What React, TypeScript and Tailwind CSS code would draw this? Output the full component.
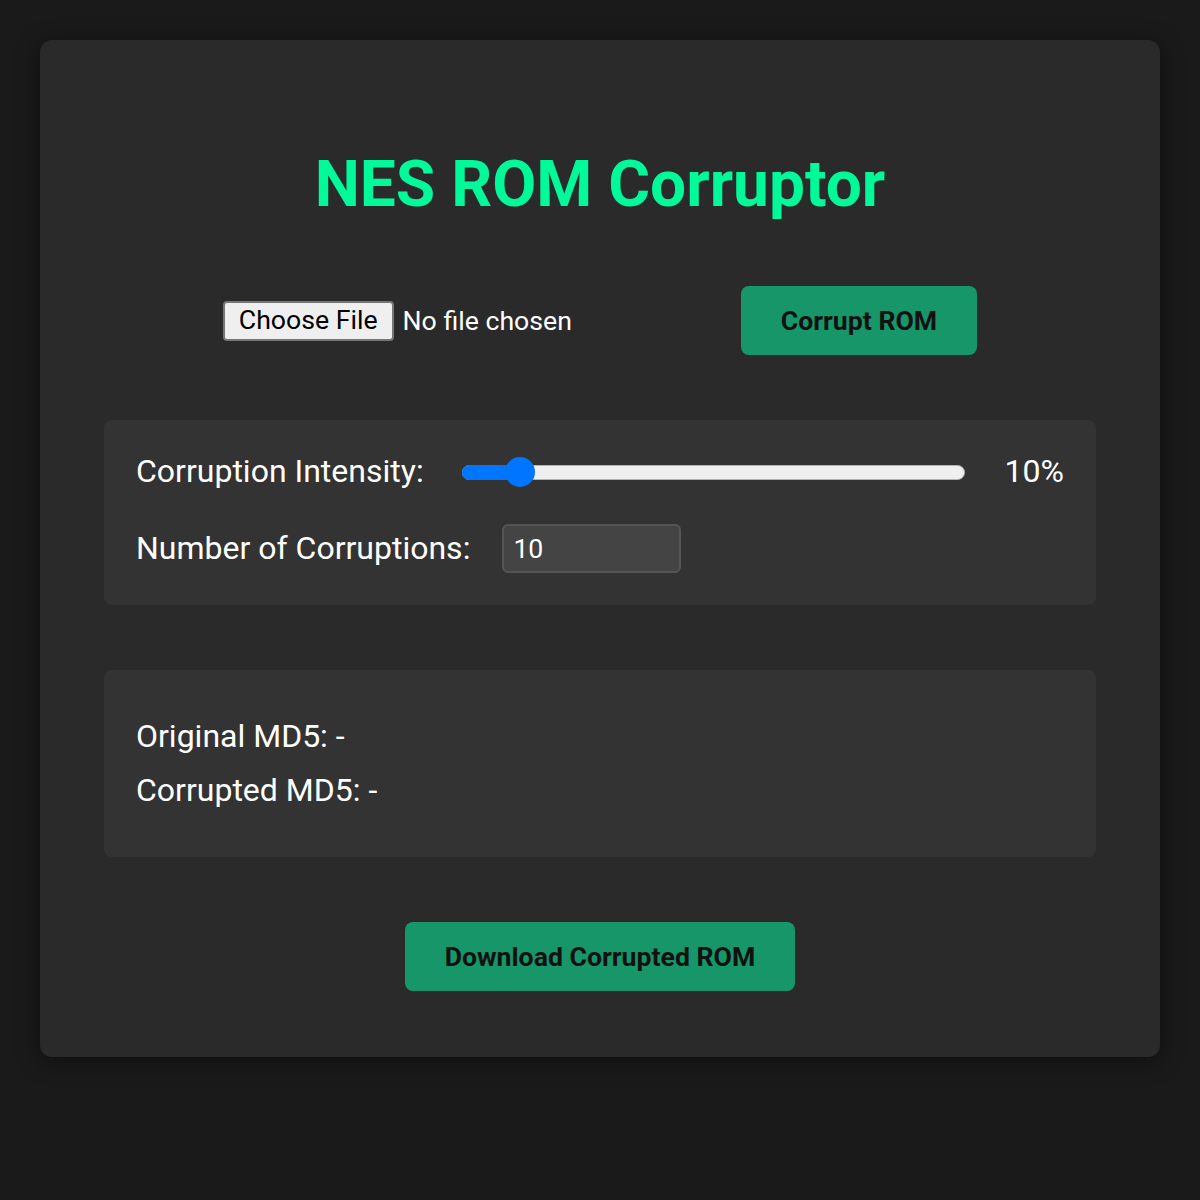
import { useState } from "react";

const green = "bg-[#169669] hover:bg-[#18a373]";

// range input look-alike, value 1..100
function IntensitySlider({ value }: { value: number }) {
  const pct = (value - 1) / 99;
  return (
    <div className="relative h-[30px] flex-1 flex items-center">
      <div className="h-[15px] w-full rounded-full bg-[#efefef] border border-[#b3b3b3]" />
      <div
        className="absolute left-0 h-[15px] rounded-l-full bg-[#0075ff]"
        style={{ width: `calc((100% - 30px) * ${pct} + 15px)` }}
      />
      <div
        className="absolute top-0 h-[30px] w-[30px] rounded-full bg-[#0075ff]"
        style={{ left: `calc((100% - 30px) * ${pct})` }}
      />
    </div>
  );
}

export default function App() {
  const [intensity] = useState(10);
  const [count, setCount] = useState("10");

  return (
    <div className="min-h-screen bg-[#1a1a1a] p-10 font-['Roboto',sans-serif] text-[32px] text-white">
      <div className="rounded-xl bg-[#2a2a2a] px-16 pt-16 pb-[66px] shadow-[0_4px_24px_rgba(0,0,0,0.45)]">
        <h1 className="mt-[43px] text-center text-[64px] font-bold leading-[75px] text-[#00fa9a]">
          NES ROM Corruptor
        </h1>

        <div className="mt-16 flex items-center justify-center gap-10">
          <input
            type="file"
            className="w-[478px] text-[26.67px] leading-[31px] text-white file:mr-[9px] file:h-10 file:rounded-[4px] file:border-2 file:border-solid file:border-[#767676] file:bg-[#efefef] file:px-[14px] file:text-black"
          />
          <button className={`h-[69px] rounded-lg px-10 text-[26.67px] font-bold text-[#111] ${green}`}>
            Corrupt ROM
          </button>
        </div>

        <div className="mt-[65px] flex flex-col gap-8 rounded-lg bg-[#333333] p-8">
          <div className="flex h-10 items-center gap-[38px]">
            <span className="leading-[37.5px]">Corruption Intensity:</span>
            <IntensitySlider value={intensity} />
            <span className="ml-[2px] leading-[37.5px]">{intensity}%</span>
          </div>
          <div className="flex items-center gap-8">
            <span className="leading-[37.5px]">Number of Corruptions:</span>
            <input
              type="number"
              value={count}
              onChange={(e) => setCount(e.target.value)}
              className="h-[49px] w-[179px] rounded-md border-2 border-[#555] bg-[#444] px-[9px] text-[26.67px] text-white outline-none"
            />
          </div>
        </div>

        <div className="mt-[65px] rounded-lg bg-[#333333] p-8">
          <p className="my-4 leading-[37.5px]">Original MD5: -</p>
          <p className="my-4 leading-[37.5px]">Corrupted MD5: -</p>
        </div>

        <div className="mt-[65px] flex justify-center">
          <button className={`h-[69px] rounded-lg px-10 text-[26.67px] font-bold text-[#111] ${green}`}>
            Download Corrupted ROM
          </button>
        </div>
      </div>
    </div>
  );
}
